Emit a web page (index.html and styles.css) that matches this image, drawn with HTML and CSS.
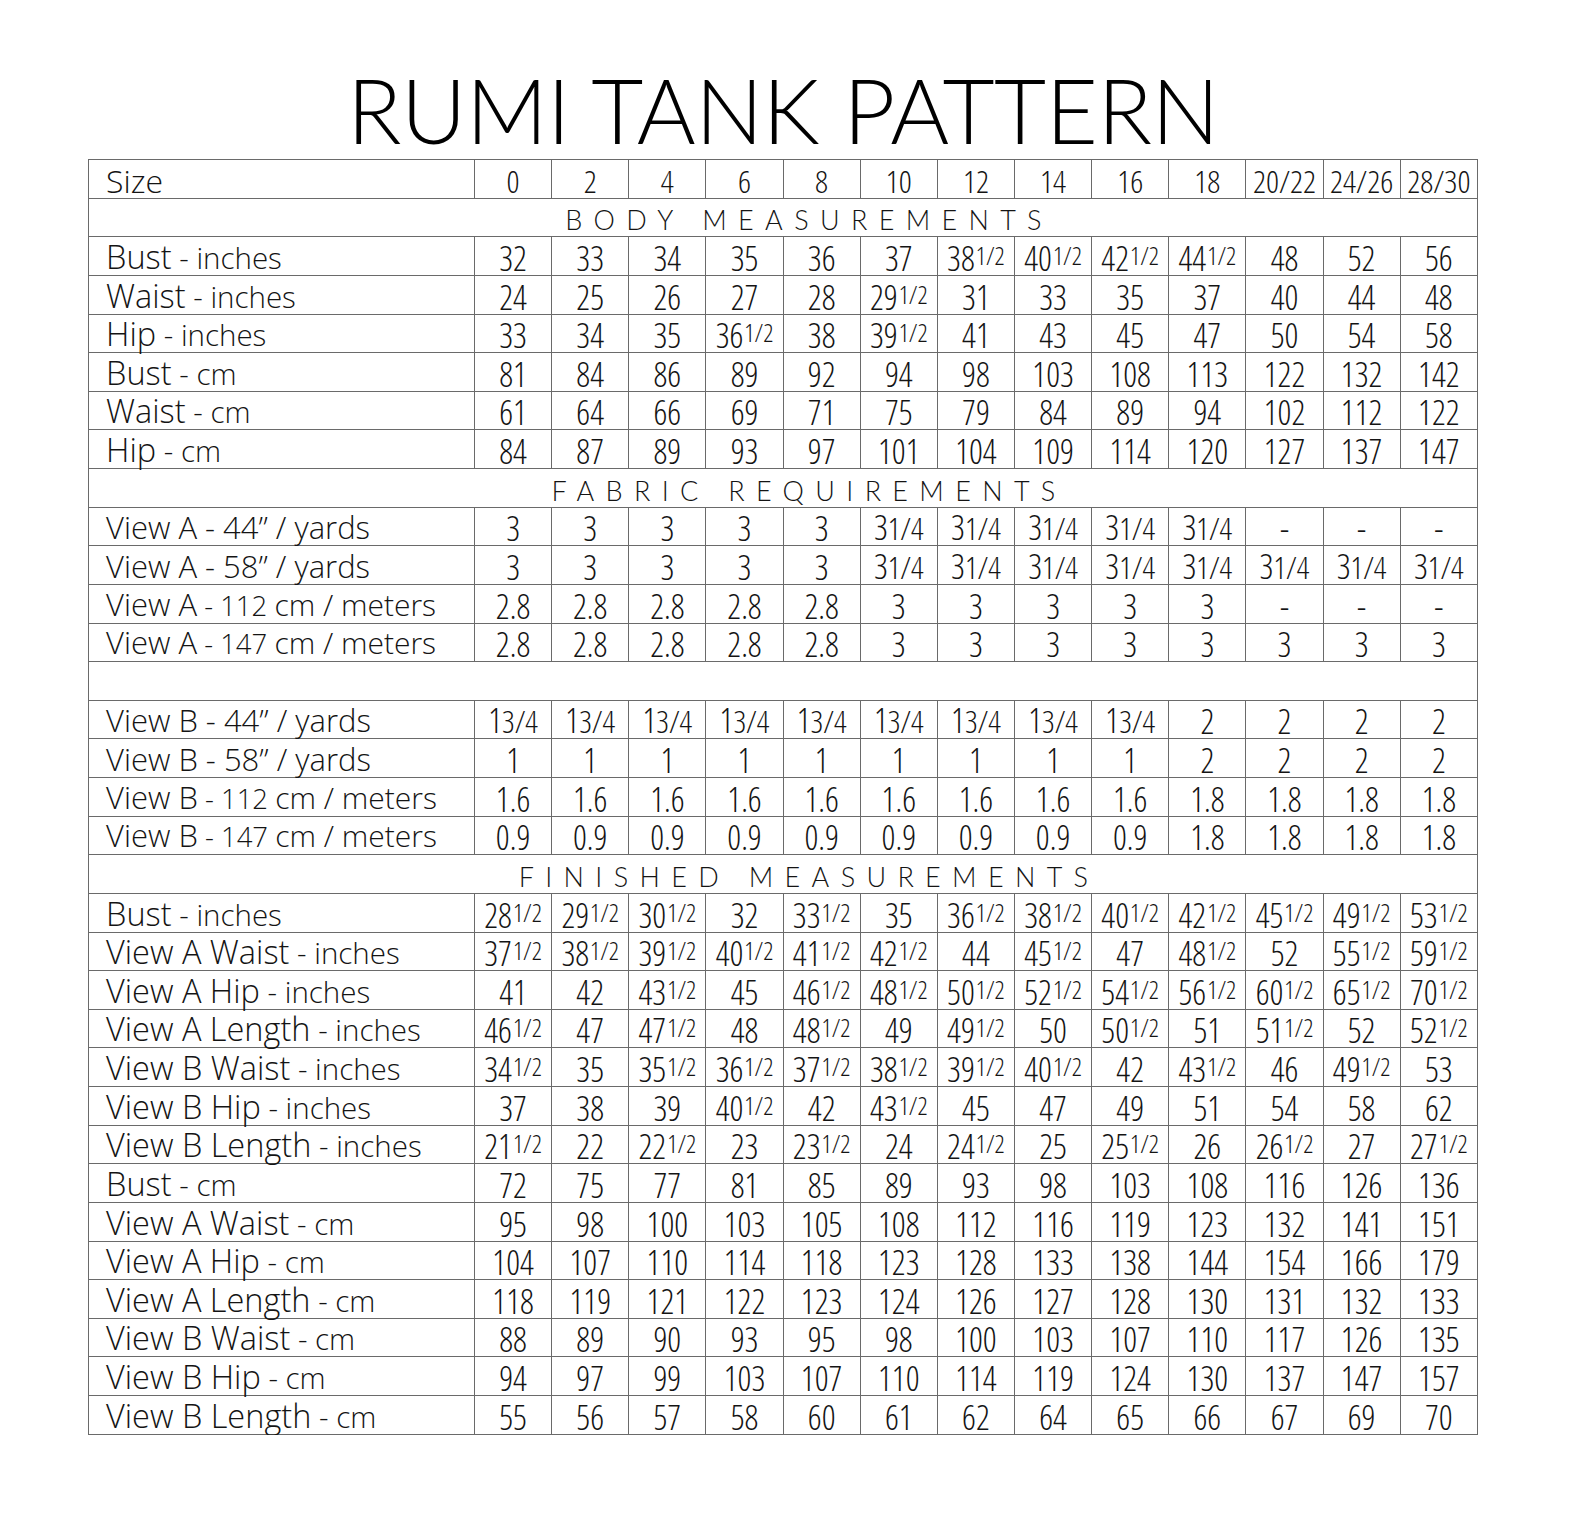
FILE: index.html
```html
<!DOCTYPE html>
<html lang="en">
<head>
<meta charset="utf-8">
<title>Rumi Tank Pattern</title>
<link rel="stylesheet" href="styles.css">
</head>
<body>
<main class="page">
<h1 class="title">RUMI TANK PATTERN</h1>
<table class="chart">
<colgroup><col class="c-label"><col><col><col><col><col><col><col><col><col><col><col><col><col></colgroup>
<tbody>
<tr class="size-row"><td class="lbl">Size</td><td>0</td><td>2</td><td>4</td><td>6</td><td>8</td><td>10</td><td>12</td><td>14</td><td>16</td><td>18</td><td>20/22</td><td>24/26</td><td>28/30</td></tr>
<tr class="sec"><td colspan="14">BODY MEASUREMENTS</td></tr>
<tr><td class="lbl"><span class="m">Bust</span><span class="s"> - inches</span></td><td>32</td><td>33</td><td>34</td><td>35</td><td>36</td><td>37</td><td>38<span class="f">1/2</span></td><td>40<span class="f">1/2</span></td><td>42<span class="f">1/2</span></td><td>44<span class="f">1/2</span></td><td>48</td><td>52</td><td>56</td></tr>
<tr><td class="lbl"><span class="m">Waist</span><span class="s"> - inches</span></td><td>24</td><td>25</td><td>26</td><td>27</td><td>28</td><td>29<span class="f">1/2</span></td><td>31</td><td>33</td><td>35</td><td>37</td><td>40</td><td>44</td><td>48</td></tr>
<tr><td class="lbl"><span class="m">Hip</span><span class="s"> - inches</span></td><td>33</td><td>34</td><td>35</td><td>36<span class="f">1/2</span></td><td>38</td><td>39<span class="f">1/2</span></td><td>41</td><td>43</td><td>45</td><td>47</td><td>50</td><td>54</td><td>58</td></tr>
<tr><td class="lbl"><span class="m">Bust</span><span class="s"> - cm</span></td><td>81</td><td>84</td><td>86</td><td>89</td><td>92</td><td>94</td><td>98</td><td>103</td><td>108</td><td>113</td><td>122</td><td>132</td><td>142</td></tr>
<tr><td class="lbl"><span class="m">Waist</span><span class="s"> - cm</span></td><td>61</td><td>64</td><td>66</td><td>69</td><td>71</td><td>75</td><td>79</td><td>84</td><td>89</td><td>94</td><td>102</td><td>112</td><td>122</td></tr>
<tr><td class="lbl"><span class="m">Hip</span><span class="s"> - cm</span></td><td>84</td><td>87</td><td>89</td><td>93</td><td>97</td><td>101</td><td>104</td><td>109</td><td>114</td><td>120</td><td>127</td><td>137</td><td>147</td></tr>
<tr class="sec"><td colspan="14">FABRIC REQUIREMENTS</td></tr>
<tr><td class="lbl"><span class="m3">View A - 44” / yards</span></td><td>3</td><td>3</td><td>3</td><td>3</td><td>3</td><td>3<span class="q">1/4</span></td><td>3<span class="q">1/4</span></td><td>3<span class="q">1/4</span></td><td>3<span class="q">1/4</span></td><td>3<span class="q">1/4</span></td><td>-</td><td>-</td><td>-</td></tr>
<tr><td class="lbl"><span class="m3">View A - 58” / yards</span></td><td>3</td><td>3</td><td>3</td><td>3</td><td>3</td><td>3<span class="q">1/4</span></td><td>3<span class="q">1/4</span></td><td>3<span class="q">1/4</span></td><td>3<span class="q">1/4</span></td><td>3<span class="q">1/4</span></td><td>3<span class="q">1/4</span></td><td>3<span class="q">1/4</span></td><td>3<span class="q">1/4</span></td></tr>
<tr><td class="lbl"><span class="m3">View A</span><span class="s2"> - 112 </span><span class="m2">cm / meters</span></td><td>2.8</td><td>2.8</td><td>2.8</td><td>2.8</td><td>2.8</td><td>3</td><td>3</td><td>3</td><td>3</td><td>3</td><td>-</td><td>-</td><td>-</td></tr>
<tr><td class="lbl"><span class="m3">View A</span><span class="s2"> - 147 </span><span class="m2">cm / meters</span></td><td>2.8</td><td>2.8</td><td>2.8</td><td>2.8</td><td>2.8</td><td>3</td><td>3</td><td>3</td><td>3</td><td>3</td><td>3</td><td>3</td><td>3</td></tr>
<tr class="blank"><td colspan="14"></td></tr>
<tr><td class="lbl"><span class="m3">View B - 44” / yards</span></td><td>1<span class="q">3/4</span></td><td>1<span class="q">3/4</span></td><td>1<span class="q">3/4</span></td><td>1<span class="q">3/4</span></td><td>1<span class="q">3/4</span></td><td>1<span class="q">3/4</span></td><td>1<span class="q">3/4</span></td><td>1<span class="q">3/4</span></td><td>1<span class="q">3/4</span></td><td>2</td><td>2</td><td>2</td><td>2</td></tr>
<tr><td class="lbl"><span class="m3">View B - 58” / yards</span></td><td>1</td><td>1</td><td>1</td><td>1</td><td>1</td><td>1</td><td>1</td><td>1</td><td>1</td><td>2</td><td>2</td><td>2</td><td>2</td></tr>
<tr><td class="lbl"><span class="m3">View B</span><span class="s2"> - 112 </span><span class="m2">cm / meters</span></td><td>1.6</td><td>1.6</td><td>1.6</td><td>1.6</td><td>1.6</td><td>1.6</td><td>1.6</td><td>1.6</td><td>1.6</td><td>1.8</td><td>1.8</td><td>1.8</td><td>1.8</td></tr>
<tr><td class="lbl"><span class="m3">View B</span><span class="s2"> - 147 </span><span class="m2">cm / meters</span></td><td>0.9</td><td>0.9</td><td>0.9</td><td>0.9</td><td>0.9</td><td>0.9</td><td>0.9</td><td>0.9</td><td>0.9</td><td>1.8</td><td>1.8</td><td>1.8</td><td>1.8</td></tr>
<tr class="sec"><td colspan="14">FINISHED MEASUREMENTS</td></tr>
<tr><td class="lbl"><span class="m">Bust</span><span class="s"> - inches</span></td><td>28<span class="f">1/2</span></td><td>29<span class="f">1/2</span></td><td>30<span class="f">1/2</span></td><td>32</td><td>33<span class="f">1/2</span></td><td>35</td><td>36<span class="f">1/2</span></td><td>38<span class="f">1/2</span></td><td>40<span class="f">1/2</span></td><td>42<span class="f">1/2</span></td><td>45<span class="f">1/2</span></td><td>49<span class="f">1/2</span></td><td>53<span class="f">1/2</span></td></tr>
<tr><td class="lbl"><span class="m">View A Waist</span><span class="s"> - inches</span></td><td>37<span class="f">1/2</span></td><td>38<span class="f">1/2</span></td><td>39<span class="f">1/2</span></td><td>40<span class="f">1/2</span></td><td>41<span class="f">1/2</span></td><td>42<span class="f">1/2</span></td><td>44</td><td>45<span class="f">1/2</span></td><td>47</td><td>48<span class="f">1/2</span></td><td>52</td><td>55<span class="f">1/2</span></td><td>59<span class="f">1/2</span></td></tr>
<tr><td class="lbl"><span class="m">View A Hip</span><span class="s"> - inches</span></td><td>41</td><td>42</td><td>43<span class="f">1/2</span></td><td>45</td><td>46<span class="f">1/2</span></td><td>48<span class="f">1/2</span></td><td>50<span class="f">1/2</span></td><td>52<span class="f">1/2</span></td><td>54<span class="f">1/2</span></td><td>56<span class="f">1/2</span></td><td>60<span class="f">1/2</span></td><td>65<span class="f">1/2</span></td><td>70<span class="f">1/2</span></td></tr>
<tr><td class="lbl"><span class="m">View A Length</span><span class="s"> - inches</span></td><td>46<span class="f">1/2</span></td><td>47</td><td>47<span class="f">1/2</span></td><td>48</td><td>48<span class="f">1/2</span></td><td>49</td><td>49<span class="f">1/2</span></td><td>50</td><td>50<span class="f">1/2</span></td><td>51</td><td>51<span class="f">1/2</span></td><td>52</td><td>52<span class="f">1/2</span></td></tr>
<tr><td class="lbl"><span class="m">View B Waist</span><span class="s"> - inches</span></td><td>34<span class="f">1/2</span></td><td>35</td><td>35<span class="f">1/2</span></td><td>36<span class="f">1/2</span></td><td>37<span class="f">1/2</span></td><td>38<span class="f">1/2</span></td><td>39<span class="f">1/2</span></td><td>40<span class="f">1/2</span></td><td>42</td><td>43<span class="f">1/2</span></td><td>46</td><td>49<span class="f">1/2</span></td><td>53</td></tr>
<tr><td class="lbl"><span class="m">View B Hip</span><span class="s"> - inches</span></td><td>37</td><td>38</td><td>39</td><td>40<span class="f">1/2</span></td><td>42</td><td>43<span class="f">1/2</span></td><td>45</td><td>47</td><td>49</td><td>51</td><td>54</td><td>58</td><td>62</td></tr>
<tr><td class="lbl"><span class="m">View B Length</span><span class="s"> - inches</span></td><td>21<span class="f">1/2</span></td><td>22</td><td>22<span class="f">1/2</span></td><td>23</td><td>23<span class="f">1/2</span></td><td>24</td><td>24<span class="f">1/2</span></td><td>25</td><td>25<span class="f">1/2</span></td><td>26</td><td>26<span class="f">1/2</span></td><td>27</td><td>27<span class="f">1/2</span></td></tr>
<tr><td class="lbl"><span class="m">Bust</span><span class="s"> - cm</span></td><td>72</td><td>75</td><td>77</td><td>81</td><td>85</td><td>89</td><td>93</td><td>98</td><td>103</td><td>108</td><td>116</td><td>126</td><td>136</td></tr>
<tr><td class="lbl"><span class="m">View A Waist</span><span class="s"> - cm</span></td><td>95</td><td>98</td><td>100</td><td>103</td><td>105</td><td>108</td><td>112</td><td>116</td><td>119</td><td>123</td><td>132</td><td>141</td><td>151</td></tr>
<tr><td class="lbl"><span class="m">View A Hip</span><span class="s"> - cm</span></td><td>104</td><td>107</td><td>110</td><td>114</td><td>118</td><td>123</td><td>128</td><td>133</td><td>138</td><td>144</td><td>154</td><td>166</td><td>179</td></tr>
<tr><td class="lbl"><span class="m">View A Length</span><span class="s"> - cm</span></td><td>118</td><td>119</td><td>121</td><td>122</td><td>123</td><td>124</td><td>126</td><td>127</td><td>128</td><td>130</td><td>131</td><td>132</td><td>133</td></tr>
<tr><td class="lbl"><span class="m">View B Waist</span><span class="s"> - cm</span></td><td>88</td><td>89</td><td>90</td><td>93</td><td>95</td><td>98</td><td>100</td><td>103</td><td>107</td><td>110</td><td>117</td><td>126</td><td>135</td></tr>
<tr><td class="lbl"><span class="m">View B Hip</span><span class="s"> - cm</span></td><td>94</td><td>97</td><td>99</td><td>103</td><td>107</td><td>110</td><td>114</td><td>119</td><td>124</td><td>130</td><td>137</td><td>147</td><td>157</td></tr>
<tr><td class="lbl"><span class="m">View B Length</span><span class="s"> - cm</span></td><td>55</td><td>56</td><td>57</td><td>58</td><td>60</td><td>61</td><td>62</td><td>64</td><td>65</td><td>66</td><td>67</td><td>69</td><td>70</td></tr>
</tbody>
</table>
</main>
</body>
</html>
```
FILE: styles.css
```css
html, body {
  margin: 0;
  padding: 0;
  background: #ffffff;
}
body {
  font-family: Lato, "Open Sans", "Liberation Sans", sans-serif;
  font-weight: 300;
  color: #141414;
}
.page {
  width: 1588px;
  padding: 60px 0 0 88px;
  box-sizing: border-box;
}
.title {
  width: 1390px;
  margin: 0;
  text-align: center;
  font-weight: 300;
  font-size: 90px;
  line-height: 99px;
  letter-spacing: -0.5px;
  color: #000;
}
.chart {
  width: 1390px;
  border-collapse: collapse;
  table-layout: fixed;
}
.c-label { width: 386px; }
.chart tr { height: 38.64px; }
.chart td {
  border: 1px solid #6a6a6a;
  padding: 0 0 1px 0;
  text-align: center;
  vertical-align: bottom;
  font-family: "Open Sans", Lato, sans-serif;
  font-stretch: 75%;
  font-weight: 300;
  font-size: 34px;
  line-height: 32px;
  white-space: nowrap;
}
.chart td.lbl {
  font-family: "Open Sans", Lato, sans-serif;
  font-stretch: 92%;
  font-size: 30px;
  text-align: left;
  padding-left: 17px;
}
.m { font-size: 32.5px; }
.m3 { font-size: 31px; }
.m2 { font-size: 30px; }
.s { font-size: 29.5px; }
.s2 { font-size: 27.5px; }
.f {
  font-size: 25px;
  vertical-align: 6px;
  line-height: 1;
  margin-left: 1px;
}
.q {
  font-size: 31px;
  line-height: 1;
}
.size-row td { font-size: 32px; }
.chart .size-row td.lbl { font-size: 32px; }
.sec td {
  font-family: Lato, "Open Sans", sans-serif;
  font-stretch: normal;
  font-size: 27px;
  letter-spacing: 0.42em;
  padding-left: 52px;
  line-height: 30px;
}
```
